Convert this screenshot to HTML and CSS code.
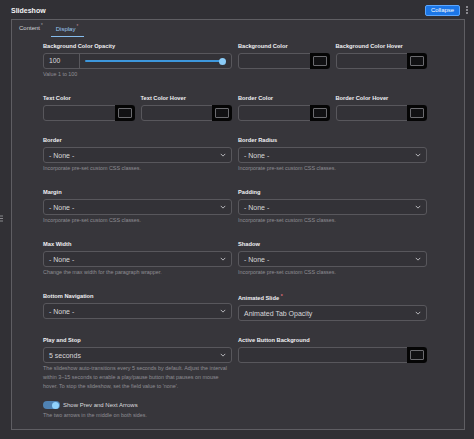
FILE: index.html
```html
<!DOCTYPE html>
<html lang="en">
<head>
<meta charset="utf-8">
<title>Slideshow</title>
<link rel="stylesheet" href="styles.css">
</head>
<body>
<div class="grip"><svg width="4" height="7" viewBox="0 0 4 7"><rect x="0" y="0.5" width="3" height="1" fill="#8a898e"/><rect x="0" y="3" width="3" height="1" fill="#8a898e"/><rect x="0" y="5.5" width="3" height="1" fill="#8a898e"/></svg></div>
<header class="header">
  <h1 class="title">Slideshow</h1>
  <div class="actions">
    <button class="btn-collapse">Collapse</button>
    <span class="kebab"><i></i><i></i><i></i></span>
  </div>
</header>
<section class="panel">
  <nav class="tabs">
    <span class="tab">Content<sup>*</sup></span>
    <span class="tab active">Display<sup>*</sup></span>
  </nav>
  <div class="grid">
    <div class="field span2">
      <label class="label">Background Color Opacity</label>
      <div class="control range">
        <span class="num">100</span>
        <span class="slider"><span class="track"></span><span class="thumb"></span></span>
      </div>
      <div class="help">Value 1 to 100</div>
    </div>
    <div class="field">
      <label class="label">Background Color</label>
      <div class="control color"><span class="swatch"><i></i></span></div>
    </div>
    <div class="field">
      <label class="label">Background Color Hover</label>
      <div class="control color"><span class="swatch"><i></i></span></div>
    </div>

    <div class="field">
      <label class="label">Text Color</label>
      <div class="control color"><span class="swatch"><i></i></span></div>
    </div>
    <div class="field">
      <label class="label">Text Color Hover</label>
      <div class="control color"><span class="swatch"><i></i></span></div>
    </div>
    <div class="field">
      <label class="label">Border Color</label>
      <div class="control color"><span class="swatch"><i></i></span></div>
    </div>
    <div class="field">
      <label class="label">Border Color Hover</label>
      <div class="control color"><span class="swatch"><i></i></span></div>
    </div>

    <div class="field span2">
      <label class="label">Border</label>
      <div class="control select"><span>- None -</span><svg class="chev" viewBox="0 0 8 5"><path d="M1 1l3 3 3-3"/></svg></div>
      <div class="help">Incorporate pre-set custom CSS classes.</div>
    </div>
    <div class="field span2">
      <label class="label">Border Radius</label>
      <div class="control select"><span>- None -</span><svg class="chev" viewBox="0 0 8 5"><path d="M1 1l3 3 3-3"/></svg></div>
      <div class="help">Incorporate pre-set custom CSS classes.</div>
    </div>

    <div class="field span2">
      <label class="label">Margin</label>
      <div class="control select"><span>- None -</span><svg class="chev" viewBox="0 0 8 5"><path d="M1 1l3 3 3-3"/></svg></div>
      <div class="help">Incorporate pre-set custom CSS classes.</div>
    </div>
    <div class="field span2">
      <label class="label">Padding</label>
      <div class="control select"><span>- None -</span><svg class="chev" viewBox="0 0 8 5"><path d="M1 1l3 3 3-3"/></svg></div>
      <div class="help">Incorporate pre-set custom CSS classes.</div>
    </div>

    <div class="field span2">
      <label class="label">Max Width</label>
      <div class="control select"><span>- None -</span><svg class="chev" viewBox="0 0 8 5"><path d="M1 1l3 3 3-3"/></svg></div>
      <div class="help">Change the max width for the paragraph wrapper.</div>
    </div>
    <div class="field span2">
      <label class="label">Shadow</label>
      <div class="control select"><span>- None -</span><svg class="chev" viewBox="0 0 8 5"><path d="M1 1l3 3 3-3"/></svg></div>
      <div class="help">Incorporate pre-set custom CSS classes.</div>
    </div>

    <div class="field span2">
      <label class="label">Bottom Navigation</label>
      <div class="control select"><span>- None -</span><svg class="chev" viewBox="0 0 8 5"><path d="M1 1l3 3 3-3"/></svg></div>
    </div>
    <div class="field span2">
      <label class="label">Animated Slide <span class="req">*</span></label>
      <div class="control select"><span>Animated Tab Opacity</span><svg class="chev" viewBox="0 0 8 5"><path d="M1 1l3 3 3-3"/></svg></div>
    </div>

    <div class="field span2">
      <label class="label">Play and Stop</label>
      <div class="control select"><span>5 seconds</span><svg class="chev" viewBox="0 0 8 5"><path d="M1 1l3 3 3-3"/></svg></div>
      <div class="help">The slideshow auto-transitions every 5 seconds by default. Adjust the interval within 3–15 seconds to enable a play/pause button that pauses on mouse hover. To stop the slideshow, set the field value to 'none'.</div>
    </div>
    <div class="field span2">
      <label class="label">Active Button Background</label>
      <div class="control color"><span class="swatch"><i></i></span></div>
    </div>

    <div class="field span4 toggle-field">
      <div class="toggle-row">
        <span class="toggle"><span class="knob"></span></span>
        <span class="toggle-label">Show Prev and Next Arrows</span>
      </div>
      <div class="help">The two arrows in the middle on both sides.</div>
    </div>
  </div>
</section>
</body>
</html>
```

FILE: styles.css
```css
* { box-sizing: border-box; }
html, body { margin: 0; padding: 0; }
body {
  width: 474px;
  height: 439px;
  overflow: hidden;
  background: #313035;
  font-family: "Liberation Sans", Arial, "Noto Sans", sans-serif;
  color: #e6e6e8;
  position: relative;
}
.grip { position: absolute; left: 0; top: 215px; line-height: 0; }
.header {
  display: flex;
  align-items: center;
  justify-content: space-between;
  height: 19px;
  padding: 1px 5px 0 11px;
}
.title {
  margin: 0;
  font-size: 7px;
  font-weight: 700;
  color: #f4f4f6;
}
.actions { display: flex; align-items: center; gap: 5px; }
.btn-collapse {
  width: 35px;
  height: 11px;
  padding: 0;
  border: 1px solid #5aa6ff;
  border-radius: 2px;
  background: #1c76e6;
  color: #ffffff;
  font-family: inherit;
  font-size: 5.9px;
  line-height: 9px;
}
.kebab { display: flex; flex-direction: column; gap: 1.6px; width: 4px; align-items: center; }
.kebab i { display: block; width: 1.6px; height: 1.6px; border-radius: 50%; background: #9c9ba0; }
.panel {
  margin: 0 9px 0 11px;
  height: 411px;
  border: 1px solid #5f5e63;
  background: #37363b;
  padding: 0 7px;
}
.tabs { display: flex; gap: 8px; height: 17px; align-items: stretch; }
.tab {
  font-size: 6px;
  color: #d4d4d8;
  padding: 5px 0 0;
}
.tab sup { font-size: 4.5px; color: #a8a7ac; margin-left: 1px; vertical-align: 3px; line-height: 0; }
.tab.active {
  color: #9ccbf5;
  padding: 6px 6px 0 5px;
  border-bottom: 1px solid #86bcec;
}
.tab.active sup { color: #c98b97; }
.grid {
  margin: 4px 0 0 24px;
  width: 384px;
  display: grid;
  grid-template-columns: repeat(4, 1fr);
  column-gap: 6px;
  row-gap: 14px;
}
.field { display: flex; flex-direction: column; min-width: 0; }
.span2 { grid-column: span 2; }
.span4 { grid-column: span 4; }
.label {
  font-size: 5.7px;
  font-weight: 700;
  line-height: 10px;
  color: #f0f0f3;
  margin-bottom: 2px;
  white-space: nowrap;
}
.req { color: #e0707c; font-size: 5px; vertical-align: 2px; }
.control {
  height: 16px;
  border: 1px solid #58575c;
  border-radius: 3px;
  background: #333237;
  display: flex;
  align-items: center;
}
.help {
  margin-top: 1px;
  font-size: 5.4px;
  line-height: 9px;
  color: #8f8e94;
}
.range .num {
  width: 36px;
  height: 100%;
  border-right: 1px solid #58575c;
  padding-left: 5px;
  font-size: 6.8px;
  line-height: 14px;
  color: #dcdcdf;
}
.slider { flex: 1; position: relative; height: 100%; margin: 0 5px; }
.track {
  position: absolute; left: 0; right: 3px; top: 6px;
  height: 2px; border-radius: 1px; background: #3d97dc;
}
.thumb {
  position: absolute; right: 0; top: 3.5px;
  width: 7px; height: 7px; border-radius: 50%; background: #8acbf7;
}
.color { justify-content: flex-end; }
.swatch {
  width: 20px;
  height: 16px;
  margin: -1px -1px -1px 0;
  background: #050505;
  border-radius: 0 3px 3px 0;
  display: flex;
  align-items: center;
  justify-content: center;
}
.swatch i {
  display: block;
  width: 14px;
  height: 10px;
  border: 1px solid #6b6b6f;
  border-radius: 1px;
  background: #111113;
}
.select { justify-content: space-between; padding: 0 5px 0 5px; }
.select span { font-size: 7px; color: #d7d7da; }
.chev { width: 6px; height: 4px; fill: none; stroke: #c4c4c8; stroke-width: 1.2; }
.toggle-field { margin-top: -5px; }
.toggle-row { display: flex; align-items: center; gap: 3px; height: 10px; }
.toggle {
  width: 17px; height: 8px; border-radius: 4px;
  background: #4f82b3;
  position: relative;
}
.knob {
  position: absolute; right: 1px; top: 0.5px;
  width: 7px; height: 7px; border-radius: 50%; background: #90d2fc;
}
.toggle-label { font-size: 6px; color: #dcdcdf; }
```
